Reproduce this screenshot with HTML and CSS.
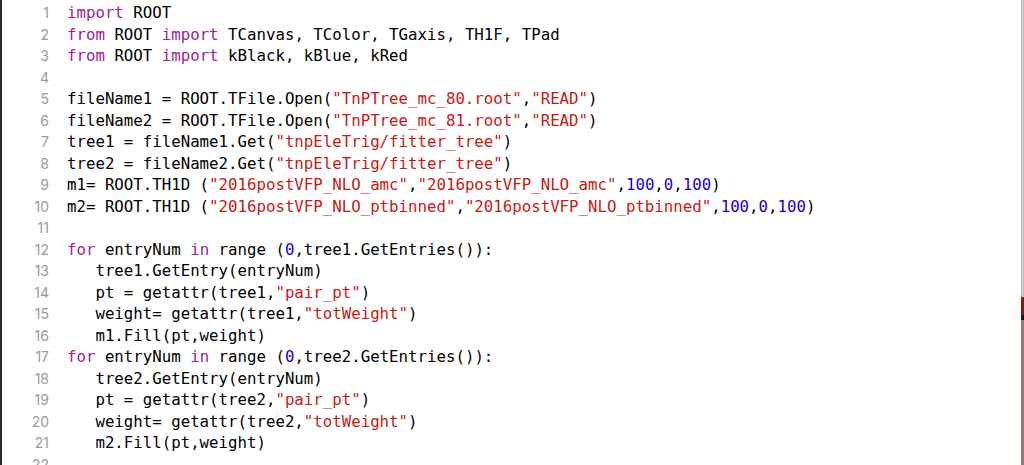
FILE: index.html
```html
<!DOCTYPE html>
<html>
<head>
<meta charset="utf-8">
<link rel="stylesheet" href="styles.css">
</head>
<body>
<div class="editor">
  <div class="gutter">
    <div>1</div><div>2</div><div>3</div><div>4</div><div>5</div><div>6</div><div>7</div><div>8</div><div>9</div><div>10</div><div>11</div><div>12</div><div>13</div><div>14</div><div>15</div><div>16</div><div>17</div><div>18</div><div>19</div><div>20</div><div>21</div><div>22</div>
  </div>
  <div class="code">
    <div class="ln"><span class="kw">import</span> ROOT</div>
    <div class="ln"><span class="kw">from</span> ROOT <span class="kw">import</span> TCanvas, TColor, TGaxis, TH1F, TPad</div>
    <div class="ln"><span class="kw">from</span> ROOT <span class="kw">import</span> kBlack, kBlue, kRed</div>
    <div class="ln"> </div>
    <div class="ln">fileName1 = ROOT.TFile.Open(<span class="str">"TnPTree_mc_80.root"</span>,<span class="str">"READ"</span>)</div>
    <div class="ln">fileName2 = ROOT.TFile.Open(<span class="str">"TnPTree_mc_81.root"</span>,<span class="str">"READ"</span>)</div>
    <div class="ln">tree1 = fileName1.Get(<span class="str">"tnpEleTrig/fitter_tree"</span>)</div>
    <div class="ln">tree2 = fileName2.Get(<span class="str">"tnpEleTrig/fitter_tree"</span>)</div>
    <div class="ln">m1= ROOT.TH1D (<span class="str">"2016postVFP_NLO_amc"</span>,<span class="str">"2016postVFP_NLO_amc"</span>,<span class="num">100</span>,<span class="num">0</span>,<span class="num">100</span>)</div>
    <div class="ln">m2= ROOT.TH1D (<span class="str">"2016postVFP_NLO_ptbinned"</span>,<span class="str">"2016postVFP_NLO_ptbinned"</span>,<span class="num">100</span>,<span class="num">0</span>,<span class="num">100</span>)</div>
    <div class="ln"> </div>
    <div class="ln"><span class="kw">for</span> entryNum <span class="kw">in</span> range (<span class="num">0</span>,tree1.GetEntries()):</div>
    <div class="ln">   tree1.GetEntry(entryNum)</div>
    <div class="ln">   pt = getattr(tree1,<span class="str">"pair_pt"</span>)</div>
    <div class="ln">   weight= getattr(tree1,<span class="str">"totWeight"</span>)</div>
    <div class="ln">   m1.Fill(pt,weight)</div>
    <div class="ln"><span class="kw">for</span> entryNum <span class="kw">in</span> range (<span class="num">0</span>,tree2.GetEntries()):</div>
    <div class="ln">   tree2.GetEntry(entryNum)</div>
    <div class="ln">   pt = getattr(tree2,<span class="str">"pair_pt"</span>)</div>
    <div class="ln">   weight= getattr(tree2,<span class="str">"totWeight"</span>)</div>
    <div class="ln">   m2.Fill(pt,weight)</div>
    <div class="ln"> </div>
  </div>
  <div class="scrollbar"></div>
</div>
</body>
</html>
```

FILE: styles.css
```css
html, body {
  margin: 0;
  padding: 0;
  background: #ffffff;
  overflow: hidden;
}

.editor {
  display: flex;
  height: 465px;
  border-left: 2px solid #2a2a2a;
  background: #ffffff;
  overflow: hidden;
}

.gutter {
  width: 47px;
  flex: none;
  padding-top: 2px;
  text-align: right;
  font-family: Inter, "Noto Sans", sans-serif;
  font-size: 14px;
  line-height: 21.5px;
  color: #9a9a9a;
}

.gutter div {
  height: 21.5px;
}

.code {
  flex: 1;
  padding-top: 2px;
  padding-left: 18px;
  font-family: "DejaVu Sans Mono", monospace;
  font-size: 15.74px;
  line-height: 21.5px;
  color: #000000;
}

.ln {
  height: 21.5px;
  white-space: pre;
}

.kw { color: #9b2393; }
.str { color: #c41a16; }
.num { color: #1c00cf; }

.scrollbar {
  width: 3px;
  flex: none;
  background: linear-gradient(to bottom, #c4c4c4 0, #c4c4c4 297px, #8a1a10 297px, #8a1a10 315px, #1a1a1a 315px, #1a1a1a 320px, #a0766f 320px, #a0766f 465px);
}
```
